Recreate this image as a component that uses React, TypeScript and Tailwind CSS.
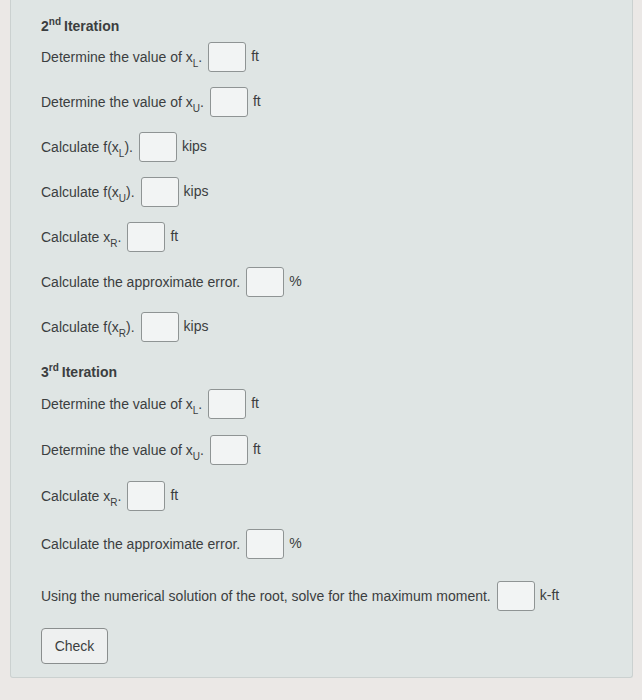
import React from "react";

type Sub = { base: string; sub: string };

// campo de respuesta vacío
const AnswerBox = () => (
  <input
    type="text"
    aria-label="answer"
    className="w-[38px] h-[30px] rounded-[3px] border border-[#8f9494] bg-[#f2f4f4] shrink-0"
  />
);

const Var = ({ v }: { v: Sub }) => (
  <span>
    {v.base}
    <sub className="text-[10px] align-[-3px]">{v.sub}</sub>
  </span>
);

const Row = ({
  children,
  unit,
  className = "",
}: {
  children: React.ReactNode;
  unit: string;
  className?: string;
}) => (
  <div className={`flex items-center h-[30px] ${className}`}>
    <span className="mr-[6px] whitespace-nowrap">{children}</span>
    <AnswerBox />
    <span className="ml-[5px] -mt-[2px]">{unit}</span>
  </div>
);

const Heading = ({ num, sup, className = "" }: { num: string; sup: string; className?: string }) => (
  <div className={`h-[20px] flex items-center font-bold text-[14px] ${className}`}>
    {num}
    <sup className="text-[10px] -top-[4px] mr-[3px]">{sup}</sup>
    Iteration
  </div>
);

const xL = { base: "x", sub: "L" };
const xU = { base: "x", sub: "U" };
const xR = { base: "x", sub: "R" };

export default function App() {
  return (
    <div
      className="w-[642px] h-[700px] bg-[#ebe8e6] text-[#3b3e40] text-[14px] overflow-hidden"
      style={{ fontFamily: '"Liberation Sans", Arial, sans-serif' }}
    >
      <div className="ml-[10px] w-[623px] h-[678px] bg-[#dfe5e4] border-x border-b border-[#cbd1d0] rounded-b-[3px] pl-[30px] pt-[16px]">
        <Heading num="2" sup="nd" />

        <div className="flex flex-col gap-[15px] mt-[6px]">
          <Row unit="ft">
            Determine the value of <Var v={xL} />.
          </Row>
          <Row unit="ft">
            Determine the value of <Var v={xU} />.
          </Row>
          <Row unit="kips">
            Calculate f(<Var v={xL} />).
          </Row>
          <Row unit="kips">
            Calculate f(<Var v={xU} />).
          </Row>
          <Row unit="ft">
            Calculate <Var v={xR} />.
          </Row>
          <Row unit="%">Calculate the approximate error.</Row>
          <Row unit="kips">
            Calculate f(<Var v={xR} />).
          </Row>
        </div>

        <Heading num="3" sup="rd" className="mt-[20px]" />

        <div className="flex flex-col gap-[16px] mt-[7px]">
          <Row unit="ft">
            Determine the value of <Var v={xL} />.
          </Row>
          <Row unit="ft">
            Determine the value of <Var v={xU} />.
          </Row>
          <Row unit="ft">
            Calculate <Var v={xR} />.
          </Row>
          <Row unit="%" className="mt-[2px]">
            Calculate the approximate error.
          </Row>
          <Row unit="k-ft" className="mt-[6px]">
            Using the numerical solution of the root, solve for the maximum moment.
          </Row>
        </div>

        <button className="mt-[17px] w-[67px] h-[36px] rounded-[4px] border border-[#8a8e8e] bg-[#eef0f0] text-[14px] text-[#3b3e40]">
          Check
        </button>
      </div>
    </div>
  );
}
